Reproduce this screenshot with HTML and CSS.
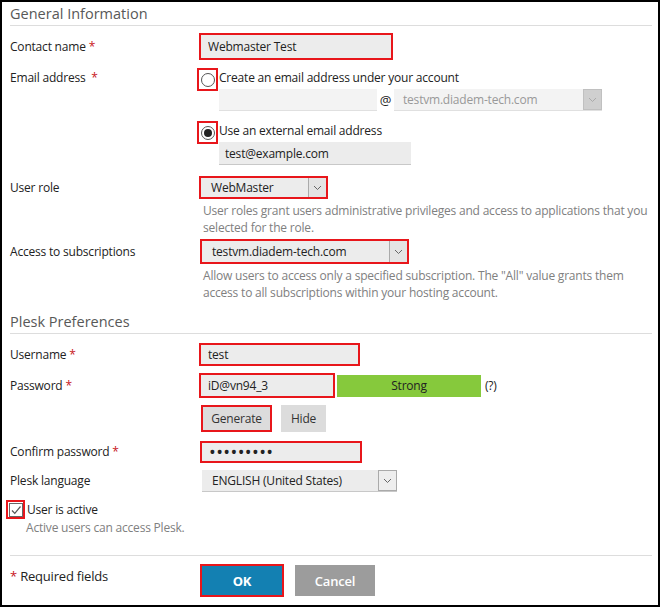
FILE: index.html
```html
<!DOCTYPE html>
<html lang="en">
<head>
    <meta charset="UTF-8">
    <title>Add User</title>
    <link rel="stylesheet" href="styles.css">
</head>
<body>
    <div class="frame">
        <h2 class="section-title">General Information</h2>

        <div class="row row-contact">
            <label class="label h27">Contact name <span class="req">*</span></label>
            <div class="field">
                <input type="text" class="text mark w-contact" value="Webmaster Test">
            </div>
        </div>

        <div class="row row-email">
            <label class="label h20">Email address &nbsp;<span class="req">*</span></label>
            <div class="field">
                <div class="option">
                    <span class="radio-box mark"><span class="radio"></span></span>
                    <span class="option-text">Create an email address under your account</span>
                </div>
                <div class="sub-row sub-create">
                    <input type="text" class="text disabled w-mailbox" value="">
                    <span class="at">@</span>
                    <div class="select disabled w-domain">
                        <span class="select-value">testvm.diadem-tech.com</span>
                        <span class="select-arrow"><svg width="9" height="6" viewBox="0 0 9 6"><path d="M1 1l3.5 3.5L8 1" fill="none" stroke="#aaa" stroke-width="1"/></svg></span>
                    </div>
                </div>
                <div class="option option-external">
                    <span class="radio-box mark"><span class="radio checked"></span></span>
                    <span class="option-text">Use an external email address</span>
                </div>
                <div class="sub-row sub-external">
                    <input type="text" class="text w-external" value="test@example.com">
                </div>
            </div>
        </div>

        <div class="row row-role">
            <label class="label h23">User role</label>
            <div class="field">
                <div class="select mark w-role">
                    <span class="select-value">WebMaster</span>
                    <span class="select-arrow"><svg width="9" height="6" viewBox="0 0 9 6"><path d="M1 1l3.5 3.5L8 1" fill="none" stroke="#666" stroke-width="1"/></svg></span>
                </div>
                <div class="hint">User roles grant users administrative privileges and access to applications that you selected for the role.</div>
            </div>
        </div>

        <div class="row row-access">
            <label class="label h25">Access to subscriptions</label>
            <div class="field">
                <div class="select mark w-access">
                    <span class="select-value">testvm.diadem-tech.com</span>
                    <span class="select-arrow"><svg width="9" height="6" viewBox="0 0 9 6"><path d="M1 1l3.5 3.5L8 1" fill="none" stroke="#666" stroke-width="1"/></svg></span>
                </div>
                <div class="hint">Allow users to access only a specified subscription. The "All" value grants them access to all subscriptions within your hosting account.</div>
            </div>
        </div>

        <h2 class="section-title section-prefs">Plesk Preferences</h2>

        <div class="row row-username">
            <label class="label h23">Username <span class="req">*</span></label>
            <div class="field">
                <input type="text" class="text mark w-username" value="test">
            </div>
        </div>

        <div class="row row-password">
            <label class="label h25">Password <span class="req">*</span></label>
            <div class="field inline">
                <input type="text" class="text mark w-password" value="iD@vn94_3">
                <span class="strength">Strong</span>
                <span class="help">(?)</span>
            </div>
        </div>

        <div class="row row-buttons">
            <span class="label"></span>
            <div class="field inline">
                <button class="btn mark btn-generate">Generate</button>
                <button class="btn btn-hide">Hide</button>
            </div>
        </div>

        <div class="row row-confirm">
            <label class="label h22">Confirm password <span class="req">*</span></label>
            <div class="field">
                <input type="password" class="text mark w-confirm" value="iD@vn94_3">
            </div>
        </div>

        <div class="row row-language">
            <label class="label h22">Plesk language</label>
            <div class="field">
                <div class="select plain w-language">
                    <span class="select-value">ENGLISH (United States)</span>
                    <span class="select-arrow"><svg width="9" height="6" viewBox="0 0 9 6"><path d="M1 1l3.5 3.5L8 1" fill="none" stroke="#666" stroke-width="1"/></svg></span>
                </div>
            </div>
        </div>

        <div class="active-row">
            <span class="check-box mark">
                <span class="check"><svg width="12" height="12" viewBox="0 0 12 12"><path d="M2 6.5l2.8 2.8L10.5 2.5" fill="none" stroke="#555" stroke-width="1.2"/></svg></span>
            </span>
            <span>User is active</span>
        </div>
        <div class="hint hint-active">Active users can access Plesk.</div>

        <div class="row footer">
            <span class="label required"><span class="req">*</span> Required fields</span>
            <div class="field inline">
                <button class="btn mark btn-ok">OK</button>
                <button class="btn btn-cancel">Cancel</button>
            </div>
        </div>
    </div>
</body>
</html>
```

FILE: styles.css
```css
body {
    margin: 0;
    font-family: 'Open Sans', 'Liberation Sans', sans-serif;
    font-size: 12px;
    letter-spacing: -0.2px;
    color: #222;
    background: #fff;
}

.frame {
    box-sizing: border-box;
    width: 660px;
    height: 607px;
    border: 2px solid #000;
    padding: 0 6px 0 8px;
    overflow: hidden;
}

.section-title {
    margin: 0;
    font-size: 14.5px;
    font-weight: normal;
    line-height: 23px;
    letter-spacing: 0;
    color: #585858;
    border-bottom: 1px solid #ddd;
}

.section-prefs {
    margin-top: 9px;
}

.row {
    display: flex;
    align-items: flex-start;
}

.label {
    width: 189px;
    flex: none;
}

.h20 { line-height: 20px; }
.h22 { line-height: 22px; }
.h23 { line-height: 23px; }
.h25 { line-height: 25px; }
.h27 { line-height: 27px; }

.req {
    color: #c8151b;
}

.field {
    flex: 1;
    min-width: 0;
}

.field.inline {
    display: flex;
    align-items: center;
}

.mark {
    outline: 2px solid #e8161b;
    outline-offset: -2px;
}

/* text inputs */
.text {
    display: block;
    box-sizing: border-box;
    border: 0;
    border-bottom: 1px solid #c8c8c8;
    background: #ececec;
    font: inherit;
    letter-spacing: inherit;
    color: #222;
    padding: 0 9px;
    margin: 0;
}

.text.disabled {
    background: #f3f3f3;
    border-bottom-color: #e0e0e0;
}

.w-contact { width: 194px; height: 27px; }
.w-mailbox { width: 158px; height: 22px; }
.w-external { width: 192px; height: 23px; padding-left: 6px; }
.w-username { width: 161px; height: 23px; }
.w-password { width: 136px; height: 25px; }
.w-confirm {
    width: 162px;
    height: 22px;
    margin-left: 1px;
    font-size: 18px;
    letter-spacing: 0.4px;
}

/* selects */
.select {
    display: flex;
    align-items: stretch;
    box-sizing: border-box;
    background: #ececec;
    border-bottom: 1px solid #c8c8c8;
}

.select-value {
    flex: 1;
    display: flex;
    align-items: center;
    padding-left: 12px;
    white-space: nowrap;
}

.select-arrow {
    width: 17px;
    flex: none;
    display: flex;
    align-items: center;
    justify-content: center;
    border-left: 1px solid #aaa;
    background: #e4e4e4;
}

.mark .select-arrow {
    margin: 2px 2px 1px 0;
}

.select.disabled {
    background: #f3f3f3;
    border-bottom-color: #e0e0e0;
    color: #999;
}

.select.disabled .select-value {
    padding-left: 9px;
}

.select.disabled .select-arrow {
    background: #cfcfcf;
    border: 1px solid #c0c0c0;
}

.select.plain .select-value {
    padding-left: 10px;
}

.select.plain .select-arrow {
    border: 1px solid #aaa;
    background: #eee;
}

.w-domain { width: 208px; height: 22px; }
.w-role { width: 129px; height: 23px; }
.w-access { width: 209px; height: 25px; margin-left: 1px; }
.w-language { width: 195px; height: 22px; margin-left: 3px; }

/* radio options */
.option {
    display: flex;
    align-items: flex-start;
    height: 23px;
    margin-left: -2px;
}

.option-text {
    line-height: 20px;
}

.radio-box {
    display: flex;
    align-items: center;
    justify-content: center;
    width: 21px;
    height: 23px;
    margin-right: 1px;
}

.radio {
    box-sizing: border-box;
    width: 14px;
    height: 14px;
    border: 1px solid #555;
    border-radius: 50%;
    background: #fff;
    display: flex;
    align-items: center;
    justify-content: center;
}

.radio.checked::after {
    content: '';
    width: 8px;
    height: 8px;
    border-radius: 50%;
    background: #222;
}

.sub-row {
    display: flex;
    align-items: center;
    margin-left: 20px;
}

.sub-create {
    margin-top: -2px;
}

.option-external {
    margin-top: 10px;
}

.sub-external {
    margin-top: -2px;
}

.at {
    width: 17px;
    text-align: center;
    font-size: 13px;
}

.hint {
    color: #808080;
    line-height: 17px;
    margin: 3px 0 0 4px;
}

/* password */
.strength {
    box-sizing: border-box;
    width: 144px;
    height: 22px;
    margin-left: 2px;
    background: #86c93c;
    display: flex;
    align-items: center;
    justify-content: center;
}

.help {
    margin-left: 4px;
}

.btn {
    box-sizing: border-box;
    border: 0;
    margin: 0;
    padding: 0;
    font: inherit;
    letter-spacing: inherit;
    cursor: pointer;
    background: #dcdcdc;
    color: #333;
    height: 27px;
}

.btn-generate {
    width: 71px;
    margin-left: 2px;
}

.btn-hide {
    width: 45px;
    margin-left: 9px;
}

/* vertical rhythm */
.row-contact { margin-top: 7px; }
.row-email { margin-top: 8px; }
.row-role { margin-top: 11px; }
.row-access { margin-top: 3px; }
.row-username { margin-top: 9px; }
.row-password { margin-top: 7px; }
.row-buttons { margin-top: 7px; }
.row-confirm { margin-top: 9px; }
.row-language { margin-top: 7px; }

.active-row {
    display: flex;
    align-items: center;
    height: 19px;
    margin: 8px 0 0 -4px;
}

.check-box {
    display: flex;
    align-items: center;
    justify-content: center;
    width: 19px;
    height: 19px;
    margin-right: 2px;
}

.check {
    box-sizing: border-box;
    width: 14px;
    height: 14px;
    border: 1px solid #666;
    background: #fff;
    display: flex;
    align-items: center;
    justify-content: center;
}

.hint-active {
    margin: 0 0 0 16px;
}

.footer {
    margin-top: 19px;
    padding-top: 8px;
    border-top: 1px solid #ddd;
}

.required {
    margin-top: 4px;
    line-height: 17px;
    font-size: 13px;
}

.btn-ok {
    width: 84px;
    height: 33px;
    margin-left: 1px;
    background: #1380b2;
    color: #fff;
    font-weight: bold;
    font-size: 13px;
}

.btn-cancel {
    width: 80px;
    height: 31px;
    margin-left: 11px;
    background: #9c9c9c;
    color: #fff;
    font-weight: 600;
    font-size: 13px;
}
```
